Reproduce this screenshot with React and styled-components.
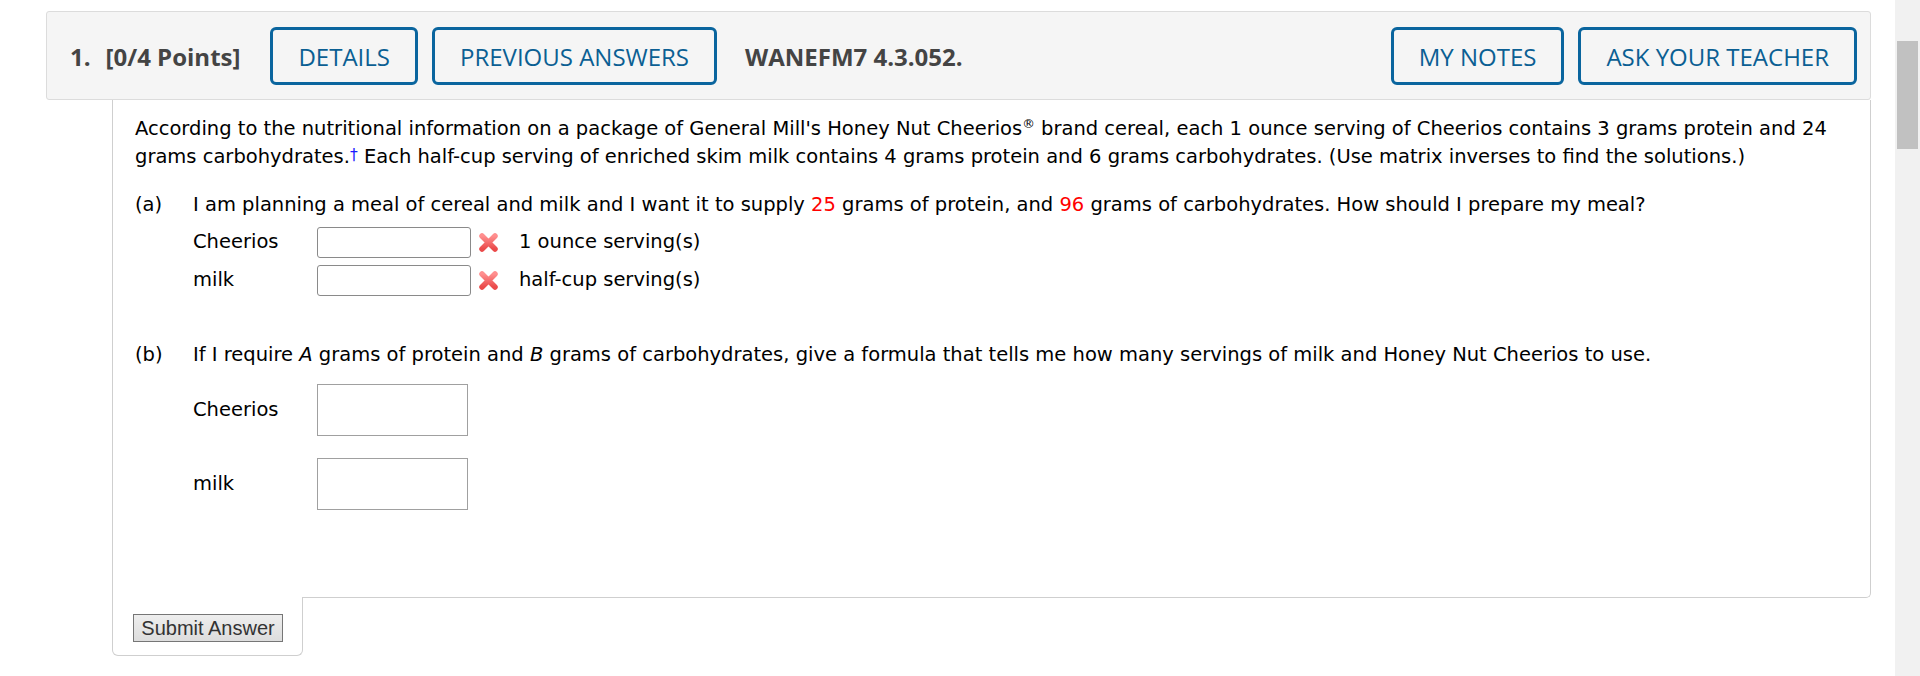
import React from "react";
import styled, { createGlobalStyle } from "styled-components";

const Global = createGlobalStyle`
  html, body { margin: 0; padding: 0; height: 676px; overflow: hidden; background: #fff; }
  #root { height: 676px; }
`;

const Page = styled.div`
  display: flex;
  height: 676px;
`;

const Main = styled.div`
  flex: 1;
  min-width: 0;
  padding: 11px 24px 0 46px;
`;

const Scrollbar = styled.div`
  width: 25px;
  background: #f1f1f1;
  padding: 41px 2px 0 2px;
  box-sizing: border-box;
`;

const Thumb = styled.div`
  height: 108px;
  background: #c1c1c1;
`;

const Header = styled.div`
  display: flex;
  align-items: center;
  background: #f5f5f5;
  border: 1px solid #dcdcdc;
  border-radius: 3px;
  padding: 15px 13px 14px 23px;
  font-family: "Open Sans", "Noto Sans", sans-serif;
  font-size: 24px;
`;

const Label = styled.span`
  font-weight: 700;
  color: #444;
  margin-right: ${(p) => p.$mr || 0}px;
  white-space: nowrap;
`;

const HeadButton = styled.button`
  height: 58px;
  box-sizing: border-box;
  border: 3px solid #0a659e;
  border-radius: 6px;
  background: transparent;
  color: #0b5f93;
  font-family: "Open Sans", "Noto Sans", sans-serif;
  font-size: 24px;
  font-weight: 500;
  padding: 0 25px;
  margin-right: ${(p) => p.$mr || 0}px;
  white-space: nowrap;
  cursor: pointer;
`;

const Spacer = styled.div`
  flex: 1;
`;

const QuestionBody = styled.div`
  margin-left: 66px;
  border: 1px solid #cfcfcf;
  border-top: none;
  border-radius: 0 0 5px 0;
  padding: 15px 22px 87px 22px;
  font-family: "DejaVu Sans", Verdana, sans-serif;
  font-size: 19.5px;
  line-height: 28px;
  color: #000;
`;

const Para = styled.p`
  margin: 0;
`;

const Sup = styled.sup`
  font-size: 0.65em;
  line-height: 0;
`;

const Dagger = styled.span`
  color: #1a1aff;
  font-size: 0.8em;
  vertical-align: 0.2em;
  line-height: 0;
`;

const Part = styled.div`
  display: grid;
  grid-template-columns: 58px 1fr;
  margin-top: ${(p) => p.$mt}px;
`;

const Red = styled.span`
  color: #ff0000;
`;

const AnswerGrid = styled.div`
  display: grid;
  grid-template-columns: 124px auto auto 1fr;
  align-items: center;
  margin-top: ${(p) => p.$mt}px;
  row-gap: ${(p) => p.$gap}px;
`;

const RowLabel = styled.div`
  height: ${(p) => p.$h}px;
  display: flex;
  align-items: center;
`;

const SmallInput = styled.input`
  width: 154px;
  height: 31px;
  box-sizing: border-box;
  border: 1px solid #8a8a8a;
  border-radius: 3px;
  background: #fff;
  margin: 0;
`;

const BigInput = styled.input`
  width: 151px;
  height: 52px;
  box-sizing: border-box;
  border: 1px solid #a0a0a0;
  border-radius: 0;
  background: #fff;
  margin: 0;
`;

const Wrong = styled.span`
  display: flex;
  margin: 0 20px 0 7px;
`;

const Unit = styled.span``;

const Empty = styled.span``;

const SubmitTab = styled.div`
  position: relative;
  margin: -1px 0 0 66px;
  width: 191px;
  box-sizing: border-box;
  background: #fff;
  border: 1px solid #cfcfcf;
  border-top: none;
  border-radius: 0 0 6px 6px;
  padding: 17px 0 13px 20px;
`;

const SubmitButton = styled.button`
  height: 28px;
  width: 150px;
  box-sizing: border-box;
  border: 1px solid #767676;
  background: linear-gradient(#eeeeee, #dddddd);
  color: #333;
  font-family: "Liberation Sans", Arial, sans-serif;
  font-size: 20px;
  padding: 0;
  margin: 0;
  display: block;
  cursor: pointer;
`;

const CrossIcon = () => (
  <svg width="21" height="21" viewBox="0 0 21 21">
    <defs>
      <linearGradient id="xg" x1="0" y1="0" x2="0" y2="1">
        <stop offset="0" stopColor="#ff8f8f" />
        <stop offset="1" stopColor="#ea4a4a" />
      </linearGradient>
    </defs>
    <path
      d="M4 4 L17 17 M17 4 L4 17"
      stroke="url(#xg)"
      strokeWidth="5.5"
      strokeLinecap="round"
    />
  </svg>
);

export default function App() {
  return (
    <>
      <Global />
      <Page>
        <Main>
          <Header>
            <Label $mr={15}>1.</Label>
            <Label $mr={30}>[0/4 Points]</Label>
            <HeadButton $mr={14}>DETAILS</HeadButton>
            <HeadButton $mr={28}>PREVIOUS ANSWERS</HeadButton>
            <Label>WANEFM7 4.3.052.</Label>
            <Spacer />
            <HeadButton $mr={14}>MY NOTES</HeadButton>
            <HeadButton>ASK YOUR TEACHER</HeadButton>
          </Header>
          <QuestionBody>
            <Para>
              According to the nutritional information on a package of General Mill's Honey Nut Cheerios
              <Sup>®</Sup> brand cereal, each 1 ounce serving of Cheerios contains 3 grams protein and 24
              grams carbohydrates.<Dagger>†</Dagger> Each half-cup serving of enriched skim milk contains 4
              grams protein and 6 grams carbohydrates. (Use matrix inverses to find the solutions.)
            </Para>
            <Part $mt={20}>
              <span>(a)</span>
              <div>
                I am planning a meal of cereal and milk and I want it to supply <Red>25</Red> grams of
                protein, and <Red>96</Red> grams of carbohydrates. How should I prepare my meal?
                <AnswerGrid $mt={7} $gap={6}>
                  <RowLabel $h={32}>Cheerios</RowLabel>
                  <SmallInput type="text" />
                  <Wrong>
                    <CrossIcon />
                  </Wrong>
                  <Unit>1 ounce serving(s)</Unit>
                  <RowLabel $h={32}>milk</RowLabel>
                  <SmallInput type="text" />
                  <Wrong>
                    <CrossIcon />
                  </Wrong>
                  <Unit>half-cup serving(s)</Unit>
                </AnswerGrid>
              </div>
            </Part>
            <Part $mt={45}>
              <span>(b)</span>
              <div>
                If I require <i>A</i> grams of protein and <i>B</i> grams of carbohydrates, give a formula
                that tells me how many servings of milk and Honey Nut Cheerios to use.
                <AnswerGrid $mt={15} $gap={22}>
                  <RowLabel $h={52}>Cheerios</RowLabel>
                  <BigInput type="text" />
                  <Empty />
                  <Empty />
                  <RowLabel $h={52}>milk</RowLabel>
                  <BigInput type="text" />
                  <Empty />
                  <Empty />
                </AnswerGrid>
              </div>
            </Part>
          </QuestionBody>
          <SubmitTab>
            <SubmitButton>Submit Answer</SubmitButton>
          </SubmitTab>
        </Main>
        <Scrollbar>
          <Thumb />
        </Scrollbar>
      </Page>
    </>
  );
}
